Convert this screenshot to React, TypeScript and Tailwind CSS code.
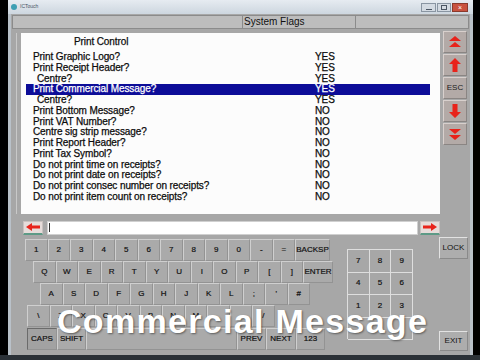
import React from "react"

const items: { label: string; value: string; indent?: boolean; selected?: boolean }[] = [
  { label: "Print Graphic Logo?", value: "YES" },
  { label: "Print Receipt Header?", value: "YES" },
  { label: "Centre?", value: "YES", indent: true },
  { label: "Print Commercial Message?", value: "YES", selected: true },
  { label: "Centre?", value: "YES", indent: true },
  { label: "Print Bottom Message?", value: "NO" },
  { label: "Print VAT Number?", value: "NO" },
  { label: "Centre sig strip message?", value: "NO" },
  { label: "Print Report Header?", value: "NO" },
  { label: "Print Tax Symbol?", value: "NO" },
  { label: "Do not print time on receipts?", value: "NO" },
  { label: "Do not print date on receipts?", value: "NO" },
  { label: "Do not print consec number on receipts?", value: "NO" },
  { label: "Do not print item count on receipts?", value: "NO" },
]

const row1 = ["1", "2", "3", "4", "5", "6", "7", "8", "9", "0", "-", "="]
const row2 = ["Q", "W", "E", "R", "T", "Y", "U", "I", "O", "P", "[", "]"]
const row3 = ["A", "S", "D", "F", "G", "H", "J", "K", "L", ";", "'", "#"]
const row4 = ["\\", "Z", "X", "C", "V", "B", "N", "M", ",", ".", "/"]

function Key({ label, className = "w-[22.5px]" }: { label: string; className?: string }) {
  return (
    <div
      className={`${className} h-full flex items-center justify-center bg-[#aaaaaa] border border-t-[#cfcfcf] border-l-[#cfcfcf] border-r-[#939393] border-b-[#939393] text-[8px] text-[#111] [-webkit-text-stroke:0.2px_#111]`}
    >
      {label}
    </div>
  )
}

function SideButton({ children }: { children: React.ReactNode }) {
  return (
    <div className="h-[22px] w-[24px] flex items-center justify-center bg-[#b3aaa7] border border-t-[#d8d0cd] border-l-[#d8d0cd] border-r-[#8a8583] border-b-[#8a8583]">
      {children}
    </div>
  )
}

function DoubleUp() {
  return (
    <svg width="14" height="14" viewBox="0 0 14 14">
      <path d="M7 1 L13 6 L1 6 Z" fill="#e8231b" />
      <path d="M7 7 L13 12 L1 12 Z" fill="#e8231b" />
    </svg>
  )
}

function DoubleDown() {
  return (
    <svg width="14" height="14" viewBox="0 0 14 14">
      <path d="M1 2 L13 2 L7 7 Z" fill="#e8231b" />
      <path d="M1 8 L13 8 L7 13 Z" fill="#e8231b" />
    </svg>
  )
}

function UpArrow() {
  return (
    <svg width="12" height="14" viewBox="0 0 12 14">
      <path d="M6 0 L12 6 L8.5 6 L8.5 14 L3.5 14 L3.5 6 L0 6 Z" fill="#e8231b" />
    </svg>
  )
}

function DownArrow() {
  return (
    <svg width="12" height="14" viewBox="0 0 12 14">
      <path d="M3.5 0 L8.5 0 L8.5 8 L12 8 L6 14 L0 8 L3.5 8 Z" fill="#e8231b" />
    </svg>
  )
}

function SideArrow({ dir }: { dir: "left" | "right" }) {
  return (
    <div className="w-[20px] h-[14px] flex items-center justify-center bg-[#e6dcda] border border-[#c9c1bf] border-b-2 border-b-[#5d9a86]">
      <svg width="14" height="8" viewBox="0 0 14 8" className={dir === "right" ? "" : "rotate-180"}>
        <path d="M0 2.5 L8 2.5 L8 0 L14 4 L8 8 L8 5.5 L0 5.5 Z" fill="#e8231b" />
      </svg>
    </div>
  )
}

export default function App() {
  return (
    <div className="w-[480px] h-[360px] bg-black overflow-hidden relative font-['Liberation_Sans',Arial,sans-serif]">
      <div className="ml-[8px] w-[465px] h-[355px] flex flex-col bg-[#b9c1c9]">
        {/* title bar */}
        <div className="h-[14px] flex items-center bg-gradient-to-b from-[#e6ebf1] to-[#cdd6df] px-[3px]">
          <div className="w-[6px] h-[6px] rounded-full bg-[#3d9fb3]" />
          <span className="ml-[3px] text-[5px] text-[#4a5563]">ICTouch</span>
          <div className="ml-auto flex items-center gap-[1px] pr-[2px]">
            <div className="w-[15px] h-[9px] bg-[#d3dae2] border border-[#8995a2] flex items-end justify-center pb-[1px]">
              <div className="w-[6px] h-[1px] bg-[#4a5563]" />
            </div>
            <div className="w-[14px] h-[9px] bg-[#d3dae2] border border-[#8995a2] flex items-center justify-center">
              <div className="w-[6px] h-[5px] border border-[#4a5563]" />
            </div>
            <div className="w-[16px] h-[9px] bg-[#c9523f] border border-[#8a3a2d] flex items-center justify-center text-[7px] leading-none text-white">
              ×
            </div>
          </div>
        </div>

        {/* client area */}
        <div className="flex-1 mx-[3px] bg-[#a7a7a7] flex flex-col">
          {/* header bar */}
          <div className="mt-[1px] mx-[1px] h-[14px] flex bg-[#bdbdbd] border border-[#8b8b8b] text-[9px] text-[#111] font-['Liberation_Sans_Narrow','Liberation_Sans',Arial,sans-serif]">
            <div className="w-[230px] border-r border-[#8b8b8b]" />
            <div className="w-[113px] border-r border-[#8b8b8b] flex items-center pl-[1px] leading-none text-[10px]">
              System Flags
            </div>
            <div className="flex-1" />
          </div>

          {/* list + side buttons */}
          <div className="mt-[2px] flex">
            <div className="w-[10px] flex justify-center pt-[2px]">
              <div className="w-[1px] h-[181px] bg-[#c9c9c9]" />
            </div>
            <div className="mt-[2px] w-[419px] h-[181px] bg-[#fcfcfc] pt-[4px] pl-[5px] text-[10px] leading-[10.75px] text-[#0c0c0c] font-['Liberation_Sans_Narrow','Liberation_Sans',Arial,sans-serif] tracking-[-0.1px] [-webkit-text-stroke:0.25px_currentColor]">
              <div className="pl-[48px] h-[15px]">Print Control</div>
              {items.map((it, i) => (
                <div
                  key={i}
                  className={`flex w-[404px] h-[10.75px] ${it.selected ? "bg-[#0d0d98] text-white" : ""}`}
                >
                  <span className={`w-[289px] ${it.indent ? "pl-[11px]" : "pl-[7px]"}`}>{it.label}</span>
                  <span>{it.value}</span>
                </div>
              ))}
            </div>
            <div className="ml-[3px] flex flex-col gap-[1px]">
              <SideButton>
                <DoubleUp />
              </SideButton>
              <SideButton>
                <UpArrow />
              </SideButton>
              <SideButton>
                <span className="text-[8px] text-[#1c1c1c]">ESC</span>
              </SideButton>
              <SideButton>
                <DownArrow />
              </SideButton>
              <SideButton>
                <DoubleDown />
              </SideButton>
            </div>
          </div>

          {/* input row */}
          <div className="mt-[6px] h-[15px] flex items-center pl-[12px]">
            <SideArrow dir="left" />
            <div className="ml-[4px] w-[371px] h-[14px] bg-white border border-[#d0d0d0] flex items-center pl-[1px]">
              <div className="w-[1px] h-[9px] bg-[#333]" />
            </div>
            <div className="ml-[2px]">
              <SideArrow dir="right" />
            </div>
          </div>

          {/* keyboard */}
          <div className="mt-[2px] flex">
            <div className="ml-[14px] pt-[2px] flex flex-col">
              <div className="flex h-[22px]">
                {row1.map((k) => (
                  <Key key={k} label={k} />
                ))}
                <Key label="BACKSP" className="w-[35px]" />
              </div>
              <div className="flex h-[22px] ml-[8px]">
                {row2.map((k) => (
                  <Key key={k} label={k} />
                ))}
                <Key label="ENTER" className="w-[30px]" />
              </div>
              <div className="flex h-[22px] ml-[15px]">
                {row3.map((k) => (
                  <Key key={k} label={k} />
                ))}
              </div>
              <div className="flex h-[22px] ml-[2px]">
                {row4.map((k) => (
                  <Key key={k} label={k} />
                ))}
              </div>
              <div className="flex h-[22px] ml-[2px] mt-[1px]">
                <Key label="CAPS" className="w-[30px] !bg-[#a2a2a2] !border-t-[#6b6b6b] !border-l-[#6b6b6b]" />
                <Key label="SHIFT" className="w-[29px]" />
                <Key label="" className="w-[151px]" />
                <Key label="PREV" className="w-[29px]" />
                <Key label="NEXT" className="w-[30px]" />
                <Key label="123" className="w-[29px]" />
              </div>
            </div>

            {/* numpad */}
            <div className="ml-[14px] mt-[12px] w-[66px] grid grid-cols-3 border-t border-l border-[#dedede] h-[90px]">
              {["7", "8", "9", "4", "5", "6", "1", "2", "3"].map((k) => (
                <div
                  key={k}
                  className="h-[22.5px] flex items-center justify-center border-r border-b border-[#dedede] text-[8px] text-[#111] [-webkit-text-stroke:0.2px_#111]"
                >
                  {k}
                </div>
              ))}
              <div className="col-span-3 h-[22px] flex items-center justify-center border-r border-b border-[#dedede] text-[8px] text-[#111]">
                0
              </div>
            </div>

            {/* lock / exit */}
            <div className="ml-[26px] flex flex-col justify-between h-[114px]">
              <div className="w-[29px] h-[22px] flex items-center justify-center bg-[#adadad] border border-t-[#e2e2e2] border-l-[#e2e2e2] border-r-[#8a8a8a] border-b-[#8a8a8a] text-[8px] text-[#111]">
                LOCK
              </div>
              <div className="w-[29px] h-[20px] flex items-center justify-center bg-[#adadad] border border-t-[#e2e2e2] border-l-[#e2e2e2] border-r-[#8a8a8a] border-b-[#8a8a8a] text-[8px] text-[#111]">
                EXIT
              </div>
            </div>
          </div>
        </div>
      </div>
      <div className="h-[5px] bg-[#2b3137]" />

      {/* video caption overlay */}
      <div className="absolute left-[57px] top-[304px] text-[34px] leading-[34px] font-bold text-white tracking-[1.3px] [text-shadow:1px_1px_2px_rgba(0,0,0,0.45)] whitespace-nowrap">
        Commercial Message
      </div>
    </div>
  )
}
